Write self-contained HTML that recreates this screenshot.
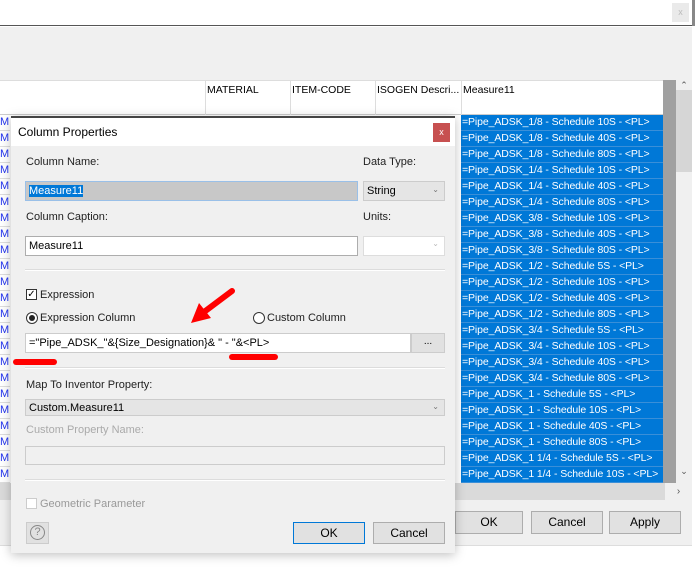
<!DOCTYPE html>
<html><head><meta charset="utf-8"><style>
*{box-sizing:border-box;margin:0;padding:0}
body{width:695px;height:570px;position:relative;overflow:hidden;background:#fff;font-family:"Liberation Sans",sans-serif;font-size:11px;color:#000}
.a{position:absolute}
.row{position:absolute;left:461px;width:202px;height:16px;background:#0078d7;color:#fff;border-bottom:1px solid #3a8fd8;padding-left:1px;line-height:15px;white-space:nowrap;overflow:hidden;font-size:10.5px;letter-spacing:-0.1px}
.m{position:absolute;left:0;width:10px;height:16px;color:#2233ee;line-height:15px;border-bottom:1px solid #ddd;font-size:11px}
.btn{position:absolute;background:#e1e1e1;border:1px solid #adadad;text-align:center;font-size:12px}
.lbl{position:absolute;font-size:11px;color:#222}
.inp{position:absolute;background:#fff;border:1px solid #adadad;font-size:11px;padding-left:3px}
.sep{position:absolute;left:25px;width:420px;height:2px;border-top:1px solid #dcdcdc;border-bottom:1px solid #fff}
.hd{position:absolute;top:81px;height:34px;border-left:1px solid #ddd;padding:3px 0 0 1px;white-space:nowrap;overflow:hidden;font-size:10.5px}
</style></head><body>
<div class="a" style="left:0;top:0;width:695px;height:26px;background:#fff;border-bottom:1px solid #555"></div>
<div class="a" style="left:672px;top:3px;width:17px;height:19px;background:#eaeaea;color:#bbb;font-size:9px;text-align:center;line-height:19px">x</div>
<div class="a" style="left:692px;top:0;width:3px;height:26px;background:#888"></div>
<div class="a" style="left:0;top:27px;width:692px;height:518px;background:#f0f0f0"></div>
<div class="a" style="left:0;top:80px;width:663px;height:35px;background:#fff;border-top:1px solid #ddd;border-bottom:1px solid #ccc"></div>
<div class="hd" style="left:205px;width:85px">MATERIAL</div>
<div class="hd" style="left:290px;width:85px">ITEM-CODE</div>
<div class="hd" style="left:375px;width:86px">ISOGEN Descri...</div>
<div class="hd" style="left:461px;width:202px">Measure11</div>
<div class="a" style="left:663px;top:80px;width:13px;height:403px;background:#a0a0a0"></div>
<div class="a" style="left:676px;top:80px;width:16px;height:403px;background:#f0f0f0"></div>
<div class="a" style="left:676px;top:90px;width:16px;height:82px;background:#d6d6d6"></div>
<div class="a" style="left:676px;top:80px;width:16px;height:12px;color:#555;font-size:9px;text-align:center">&#8963;</div>
<div class="a" style="left:676px;top:466px;width:16px;height:14px;color:#555;font-size:9px;text-align:center">&#8964;</div>
<div class="a" style="left:0;top:483px;width:665px;height:17px;background:#dadada"></div>
<div class="a" style="left:665px;top:483px;width:27px;height:17px;background:#f0f0f0;color:#555;font-size:10px;text-align:center;line-height:17px">&#8250;</div>
<div class="a" style="left:0;top:115px;width:461px;height:368px;background:#fff"></div>
<div class="row" style="top:115px">=Pipe_ADSK_1/8 - Schedule 10S - &lt;PL&gt;</div>
<div class="row" style="top:131px">=Pipe_ADSK_1/8 - Schedule 40S - &lt;PL&gt;</div>
<div class="row" style="top:147px">=Pipe_ADSK_1/8 - Schedule 80S - &lt;PL&gt;</div>
<div class="row" style="top:163px">=Pipe_ADSK_1/4 - Schedule 10S - &lt;PL&gt;</div>
<div class="row" style="top:179px">=Pipe_ADSK_1/4 - Schedule 40S - &lt;PL&gt;</div>
<div class="row" style="top:195px">=Pipe_ADSK_1/4 - Schedule 80S - &lt;PL&gt;</div>
<div class="row" style="top:211px">=Pipe_ADSK_3/8 - Schedule 10S - &lt;PL&gt;</div>
<div class="row" style="top:227px">=Pipe_ADSK_3/8 - Schedule 40S - &lt;PL&gt;</div>
<div class="row" style="top:243px">=Pipe_ADSK_3/8 - Schedule 80S - &lt;PL&gt;</div>
<div class="row" style="top:259px">=Pipe_ADSK_1/2 - Schedule 5S - &lt;PL&gt;</div>
<div class="row" style="top:275px">=Pipe_ADSK_1/2 - Schedule 10S - &lt;PL&gt;</div>
<div class="row" style="top:291px">=Pipe_ADSK_1/2 - Schedule 40S - &lt;PL&gt;</div>
<div class="row" style="top:307px">=Pipe_ADSK_1/2 - Schedule 80S - &lt;PL&gt;</div>
<div class="row" style="top:323px">=Pipe_ADSK_3/4 - Schedule 5S - &lt;PL&gt;</div>
<div class="row" style="top:339px">=Pipe_ADSK_3/4 - Schedule 10S - &lt;PL&gt;</div>
<div class="row" style="top:355px">=Pipe_ADSK_3/4 - Schedule 40S - &lt;PL&gt;</div>
<div class="row" style="top:371px">=Pipe_ADSK_3/4 - Schedule 80S - &lt;PL&gt;</div>
<div class="row" style="top:387px">=Pipe_ADSK_1 - Schedule 5S - &lt;PL&gt;</div>
<div class="row" style="top:403px">=Pipe_ADSK_1 - Schedule 10S - &lt;PL&gt;</div>
<div class="row" style="top:419px">=Pipe_ADSK_1 - Schedule 40S - &lt;PL&gt;</div>
<div class="row" style="top:435px">=Pipe_ADSK_1 - Schedule 80S - &lt;PL&gt;</div>
<div class="row" style="top:451px">=Pipe_ADSK_1 1/4 - Schedule 5S - &lt;PL&gt;</div>
<div class="row" style="top:467px">=Pipe_ADSK_1 1/4 - Schedule 10S - &lt;PL&gt;</div>
<div class="m" style="top:115px">M</div><div class="m" style="top:131px">M</div><div class="m" style="top:147px">M</div><div class="m" style="top:163px">M</div><div class="m" style="top:179px">M</div><div class="m" style="top:195px">M</div><div class="m" style="top:211px">M</div><div class="m" style="top:227px">M</div><div class="m" style="top:243px">M</div><div class="m" style="top:259px">M</div><div class="m" style="top:275px">M</div><div class="m" style="top:291px">M</div><div class="m" style="top:307px">M</div><div class="m" style="top:323px">M</div><div class="m" style="top:339px">M</div><div class="m" style="top:355px">M</div><div class="m" style="top:371px">M</div><div class="m" style="top:387px">M</div><div class="m" style="top:403px">M</div><div class="m" style="top:419px">M</div><div class="m" style="top:435px">M</div><div class="m" style="top:451px">M</div><div class="m" style="top:467px">M</div>
<div class="btn" style="left:455px;top:511px;width:68px;height:23px;line-height:21px">OK</div>
<div class="btn" style="left:531px;top:511px;width:72px;height:23px;line-height:21px">Cancel</div>
<div class="btn" style="left:609px;top:511px;width:72px;height:23px;line-height:21px">Apply</div>
<div class="a" style="left:0;top:545px;width:692px;height:1px;background:#ddd"></div>
<div class="a" style="left:11px;top:116px;width:444px;height:437px;background:#f0f0f0;border-top:2px solid #444;box-shadow:0 2px 10px rgba(0,0,0,0.25)">
<div class="a" style="left:0;top:0;width:444px;height:28px;background:#fff;font-size:12px;padding:7px 0 0 7px">Column Properties</div>
<div class="a" style="left:422px;top:5px;width:17px;height:19px;background:#c75050;color:#fff;font-size:9px;text-align:center;line-height:18px">x</div>
</div>
<div class="lbl" style="left:26px;top:156px">Column Name:</div>
<div class="lbl" style="left:363px;top:156px">Data Type:</div>
<div class="inp" style="left:25px;top:181px;width:333px;height:20px;background:#c8c8c8;border-color:#9ac0e8;padding-top:3px"><span style="background:#0078d7;color:#fff">Measure11</span></div>
<div class="inp" style="left:363px;top:181px;width:82px;height:20px;background:#e5e5e5;border-color:#ccc;padding-top:3px">String<span style="position:absolute;right:5px;color:#777;font-size:8px">&#8964;</span></div>
<div class="lbl" style="left:26px;top:211px">Column Caption:</div>
<div class="lbl" style="left:363px;top:211px">Units:</div>
<div class="inp" style="left:25px;top:236px;width:333px;height:20px;padding-top:3px">Measure11</div>
<div class="inp" style="left:363px;top:236px;width:82px;height:20px;border-color:#ddd"><span style="position:absolute;right:5px;top:2px;color:#bbb;font-size:8px">&#8964;</span></div>
<div class="sep" style="top:269px"></div>
<div class="a" style="left:26px;top:289px;width:11px;height:11px;border:1px solid #333;background:#fff;font-size:10px;line-height:9px;text-align:center">&#10003;</div>
<div class="lbl" style="left:40px;top:289px">Expression</div>
<div class="a" style="left:26px;top:312px;width:12px;height:12px;border:1px solid #333;border-radius:50%;background:#fff"><div class="a" style="left:2px;top:2px;width:6px;height:6px;border-radius:50%;background:#222"></div></div>
<div class="lbl" style="left:40px;top:312px">Expression Column</div>
<div class="a" style="left:253px;top:312px;width:12px;height:12px;border:1px solid #333;border-radius:50%;background:#fff"></div>
<div class="lbl" style="left:267px;top:312px">Custom Column</div>
<div class="inp" style="left:25px;top:333px;width:386px;height:20px;border-color:#ccc;padding-top:3px;font-size:11px">="Pipe_ADSK_"&amp;{Size_Designation}&amp; " - "&amp;&lt;PL&gt;</div>
<div class="btn" style="left:411px;top:333px;width:34px;height:20px;line-height:16px;font-size:10px;border-color:#ccc">...</div>
<div class="a" style="left:13px;top:359px;width:44px;height:6px;background:#f00;border-radius:3px"></div>
<div class="a" style="left:229px;top:354px;width:49px;height:6px;background:#f00;border-radius:3px"></div>
<svg class="a" style="left:185px;top:285px" width="55" height="45"><line x1="47" y1="6" x2="15" y2="30" stroke="#f00" stroke-width="6" stroke-linecap="round"/><polygon points="6,38 14,18 26,33" fill="#f00"/></svg>
<div class="sep" style="top:367px"></div>
<div class="lbl" style="left:26px;top:379px">Map To Inventor Property:</div>
<div class="inp" style="left:25px;top:399px;width:420px;height:17px;background:#e5e5e5;border-color:#ccc;padding-top:2px">Custom.Measure11<span style="position:absolute;right:5px;color:#777;font-size:8px">&#8964;</span></div>
<div class="lbl" style="left:26px;top:424px;color:#aaa">Custom Property Name:</div>
<div class="inp" style="left:25px;top:446px;width:420px;height:19px;background:#f0f0f0;border-color:#ccc"></div>
<div class="sep" style="top:479px"></div>
<div class="a" style="left:26px;top:498px;width:11px;height:11px;border:1px solid #ccc;background:#fff"></div>
<div class="lbl" style="left:40px;top:498px;color:#999">Geometric Parameter</div>
<div class="btn" style="left:26px;top:522px;width:23px;height:22px;border-color:#ccc"><div class="a" style="left:3px;top:2px;width:15px;height:15px;border:1px solid #888;border-radius:50%;color:#888;font-size:11px;line-height:13px">?</div></div>
<div class="btn" style="left:293px;top:522px;width:72px;height:22px;line-height:20px;border-color:#0078d7">OK</div>
<div class="btn" style="left:373px;top:522px;width:72px;height:22px;line-height:20px">Cancel</div>
</body></html>
